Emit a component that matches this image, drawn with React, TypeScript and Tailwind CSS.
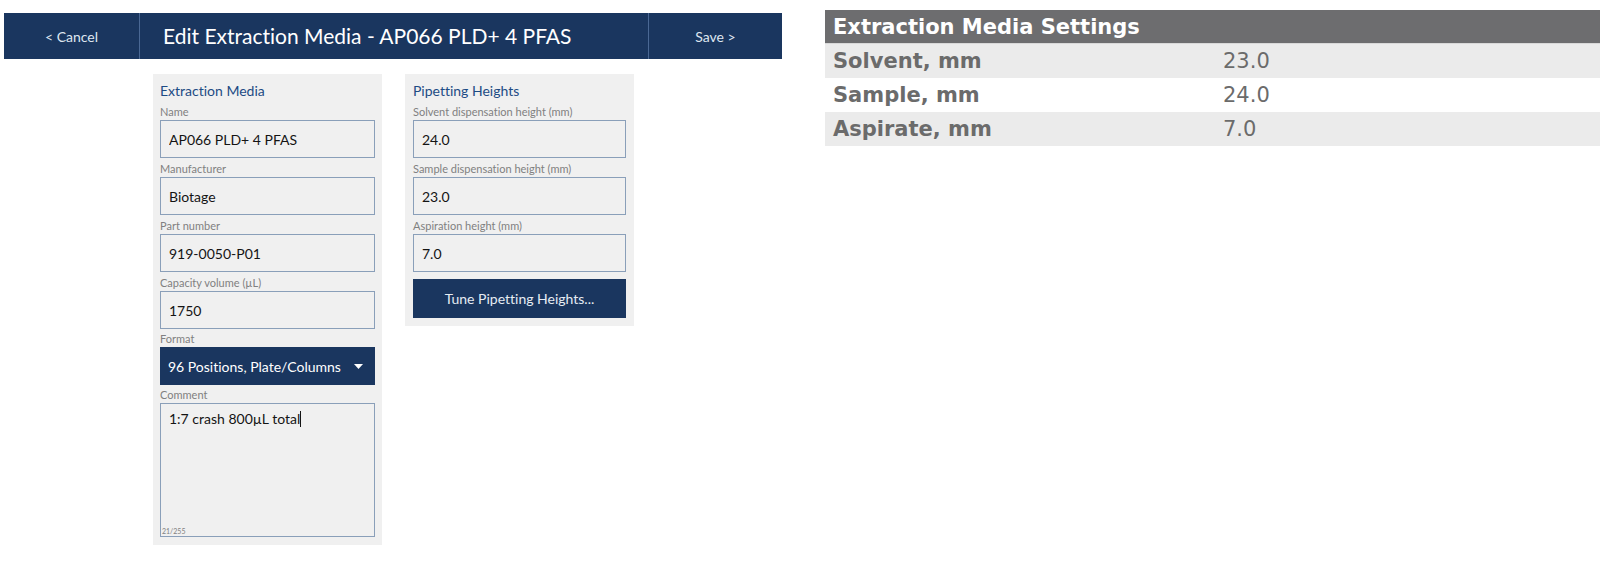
import { useState } from "react";

const uiFont = { fontFamily: "Lato, 'Noto Sans', sans-serif" };

interface FieldProps {
  label: string;
  value: string;
}

const Field = ({ label, value }: FieldProps) => (
  <div className="flex flex-col">
    <div className="h-[19px] flex items-end pb-[2px] text-[11px] leading-[13px] text-[#808080]">
      {label}
    </div>
    <input
      readOnly
      defaultValue={value}
      className="h-[38px] w-full border border-[#8a9fb9] bg-[#f0f0f0] px-[8px] text-[14px] text-[#141414] outline-none [font-variant-ligatures:none]"
    />
  </div>
);

const settings = [
  { label: "Solvent, mm", value: "23.0" },
  { label: "Sample, mm", value: "24.0" },
  { label: "Aspirate, mm", value: "7.0" },
];

export default function App() {
  const [comment] = useState("1:7 crash 800µL total");

  return (
    <div className="flex min-h-screen bg-white">
      {/* Editor */}
      <div className="w-[782px] shrink-0 pt-[13px] pl-[4px] [font-variant-ligatures:none]" style={uiFont}>
        <div className="flex h-[46px] bg-[#1a365f] text-white">
          <div className="w-[135px] flex items-center justify-center text-[14px] text-[#dfe6f0]">
            &lt; Cancel
          </div>
          <div className="w-px bg-[#4a6894]" />
          <div className="flex-1 flex items-center pl-[23px] text-[21px]">
            Edit Extraction Media - AP066 PLD+ 4 PFAS
          </div>
          <div className="w-px bg-[#4a6894]" />
          <div className="w-[133px] flex items-center justify-center text-[14px] text-[#dfe6f0]">
            Save &gt;
          </div>
        </div>

        <div className="flex items-start gap-[23px] pl-[149px] pt-[15px]">
          {/* Extraction Media */}
          <div className="w-[229px] bg-[#f0f0f0] px-[7px] pt-[6px] pb-[8px]">
            <div className="h-[21px] flex items-center text-[14px] text-[#1d4b84]">Extraction Media</div>
            <Field label="Name" value="AP066 PLD+ 4 PFAS" />
            <Field label="Manufacturer" value="Biotage" />
            <Field label="Part number" value="919-0050-P01" />
            <Field label="Capacity volume (µL)" value="1750" />
            <div className="flex flex-col">
              <div className="h-[18px] flex items-end pb-[2px] text-[11px] leading-[13px] text-[#808080]">Format</div>
              <div className="h-[38px] flex items-center justify-between bg-[#1a365f] pl-[8px] pr-[12px] text-[14px] text-white">
                <span>96 Positions, Plate/Columns</span>
                <svg width="9" height="5" viewBox="0 0 9 5">
                  <path d="M0 0 L9 0 L4.5 5 Z" fill="white" />
                </svg>
              </div>
            </div>
            <div className="flex flex-col">
              <div className="h-[18px] flex items-end pb-[2px] text-[11px] leading-[13px] text-[#808080]">Comment</div>
              <div className="relative h-[134px] border border-[#8a9fb9] bg-[#f0f0f0] px-[8px] pt-[4px] text-[14px] text-[#141414]">
                <span>{comment}</span>
                <span className="inline-block h-[16px] w-px bg-[#141414] align-[-3px]" />
                <span className="absolute bottom-[1px] left-[1px] text-[7px] leading-[8px] text-[#808080]">21/255</span>
              </div>
            </div>
          </div>

          {/* Pipetting Heights */}
          <div className="w-[229px] bg-[#f0f0f0] px-[8px] pt-[6px] pb-[8px]">
            <div className="h-[21px] flex items-center text-[14px] text-[#1d4b84]">Pipetting Heights</div>
            <Field label="Solvent dispensation height (mm)" value="24.0" />
            <Field label="Sample dispensation height (mm)" value="23.0" />
            <Field label="Aspiration height (mm)" value="7.0" />
            <button className="mt-[7px] h-[39px] w-full bg-[#1a365f] text-[14px] text-[#e6ecf3]">
              Tune Pipetting Heights...
            </button>
          </div>
        </div>
      </div>

      {/* Settings table */}
      <div className="ml-[43px] mt-[10px] w-[775px] shrink-0" style={{ fontFamily: "'DejaVu Sans', Verdana, sans-serif" }}>
        <div className="h-[34px] flex items-center bg-[#6d6d6f] px-[8px] pt-[3px] text-[21px] font-bold text-white border-b border-[#d8d8d8]">
          Extraction Media Settings
        </div>
        {settings.map((row, i) => (
          <div
            key={row.label}
            className={`h-[34px] flex items-center pt-[2px] text-[21px] text-[#6b6b6b] ${i % 2 === 0 ? "bg-[#ebebeb]" : "bg-white"}`}
          >
            <div className="w-[390px] px-[8px] font-bold">{row.label}</div>
            <div className="flex-1 px-[8px]">{row.value}</div>
          </div>
        ))}
      </div>
    </div>
  );
}
